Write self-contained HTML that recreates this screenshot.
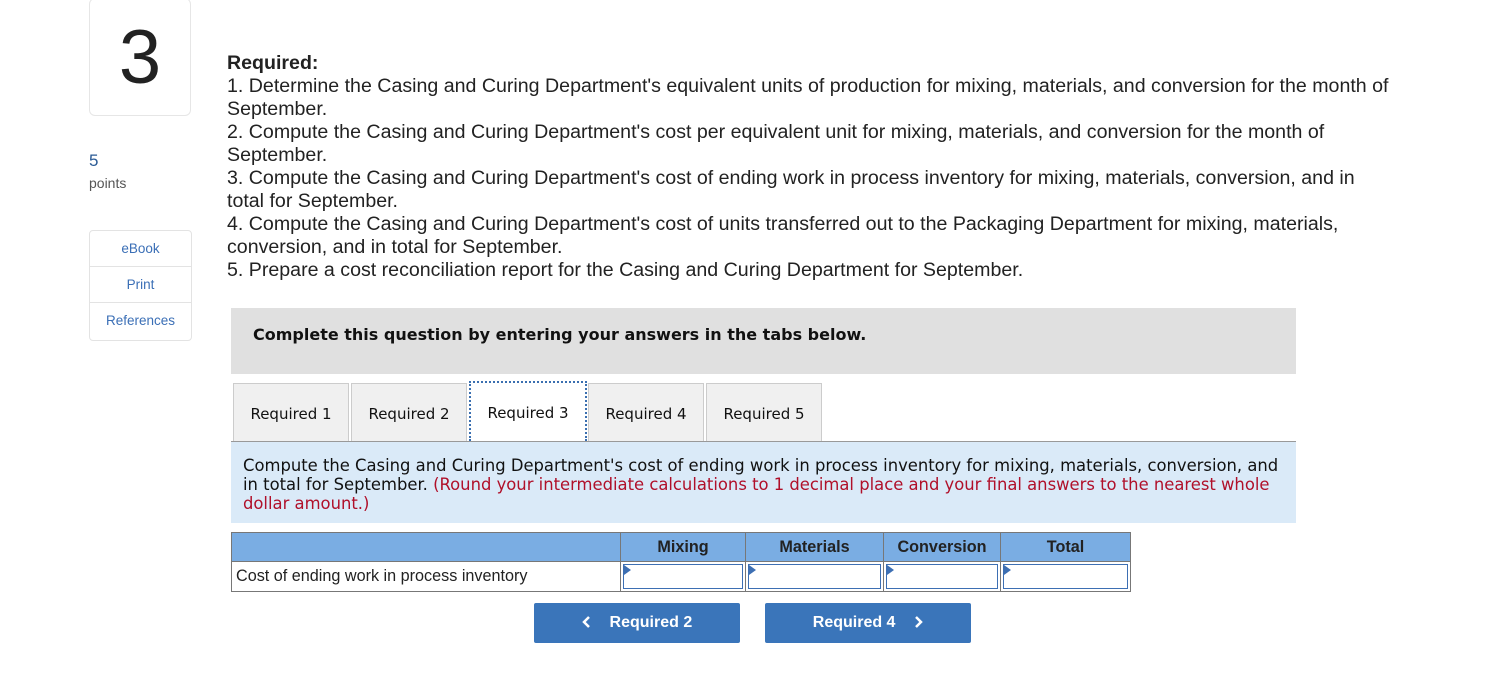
<!DOCTYPE html>
<html><head><meta charset="utf-8"><style>
*{box-sizing:border-box;margin:0;padding:0}
body{width:1503px;height:686px;background:#fff;position:relative;overflow:hidden;font-family:"Liberation Sans",sans-serif;color:#222}
.abs{position:absolute}
.qnum{left:89px;top:-2px;width:102px;height:118px;border:1px solid #e6e6e6;border-radius:6px;font-size:76px;text-align:center;line-height:118px;color:#222}
.pts{left:89px;top:150px;color:#555;font-size:14px;line-height:22px}
.pts b{font-weight:normal;color:#2a5a95;font-size:17px}
.links{left:89px;top:230px;width:103px;border:1px solid #e3e3e3;border-radius:4px}
.links div{text-align:center;color:#3b6fb6;font-size:13.5px;border-bottom:1px solid #e3e3e3;height:36px;line-height:35px}
.links div:last-child{border:none;height:37px}
.req{left:227px;top:52px;width:1250px;font-size:19.6px;line-height:23px;color:#222;white-space:nowrap}
.gray{left:231px;top:308px;width:1065px;height:66px;background:#e0e0e0;font-family:"DejaVu Sans",sans-serif;font-weight:bold;font-size:16px;padding:17px 0 0 22px;color:#111}
.tab{top:383px;height:58px;width:116px;background:#f0f0f0;border:1px solid #ccc;border-bottom:none;font-family:"DejaVu Sans",sans-serif;font-size:15px;text-align:center;line-height:60px;color:#111}
.tab.act{background:#fff;border:2px dotted #3a6fb0;border-bottom:none;height:60px;top:381px}
.blue{left:231px;top:441px;width:1065px;height:82px;background:#daeaf8;border-top:1px solid #999;font-family:"DejaVu Sans",sans-serif;font-size:16.4px;line-height:19px;padding:14px 12px;color:#111;white-space:nowrap}
.blue span{color:#b0102a}
table{position:absolute;left:231px;top:532px;border-collapse:collapse;font-size:16.2px}
td{border:1px solid #777;height:29px}
.h td{background:#7aade3;font-weight:bold;text-align:center;color:#222;height:29px}
.inp{padding:2px}
.inp div{height:25px;border:1px solid #3d6fb3;position:relative;background:#fff}
.inp div:before{content:"";position:absolute;left:0;top:0;border-left:7px solid #3d6fb3;border-top:5px solid transparent;border-bottom:5px solid transparent}
.btn{top:603px;height:40px;width:206px;background:#3a75ba;border-radius:2px;color:#fff;font-weight:bold;font-size:16px;text-align:center;line-height:40px}
.btn svg{vertical-align:-2px}
</style></head><body>
<div class="abs qnum">3</div>
<div class="abs pts"><b>5</b><br>points</div>
<div class="abs links"><div>eBook</div><div>Print</div><div>References</div></div>
<div class="abs req"><b>Required:</b><br>1. Determine the Casing and Curing Department's equivalent units of production for mixing, materials, and conversion for the month of<br>September.<br>2. Compute the Casing and Curing Department's cost per equivalent unit for mixing, materials, and conversion for the month of<br>September.<br>3. Compute the Casing and Curing Department's cost of ending work in process inventory for mixing, materials, conversion, and in<br>total for September.<br>4. Compute the Casing and Curing Department's cost of units transferred out to the Packaging Department for mixing, materials,<br>conversion, and in total for September.<br>5. Prepare a cost reconciliation report for the Casing and Curing Department for September.</div>
<div class="abs gray">Complete this question by entering your answers in the tabs below.</div>
<div class="abs tab" style="left:233px">Required 1</div>
<div class="abs tab" style="left:351px">Required 2</div>
<div class="abs tab act" style="left:469px;width:118px">Required 3</div>
<div class="abs tab" style="left:588px">Required 4</div>
<div class="abs tab" style="left:706px">Required 5</div>
<div class="abs blue">Compute the Casing and Curing Department's cost of ending work in process inventory for mixing, materials, conversion, and<br>in total for September. <span>(Round your intermediate calculations to 1 decimal place and your final answers to the nearest whole<br>dollar amount.)</span></div>
<table>
<tr class="h"><td style="width:389px"></td><td style="width:125px">Mixing</td><td style="width:138px">Materials</td><td style="width:117px">Conversion</td><td style="width:130px">Total</td></tr>
<tr><td style="padding-left:4px;color:#222">Cost of ending work in process inventory</td><td class="inp"><div></div></td><td class="inp"><div></div></td><td class="inp"><div></div></td><td class="inp"><div></div></td></tr>
</table>
<div class="abs btn" style="left:534px"><svg width="10" height="14" viewBox="0 0 10 14"><path d="M7 2L2 7l5 5" stroke="#fff" stroke-width="2.5" fill="none"/></svg>&nbsp;&nbsp;&nbsp;&nbsp;Required 2</div>
<div class="abs btn" style="left:765px">Required 4&nbsp;&nbsp;&nbsp;&nbsp;<svg width="10" height="14" viewBox="0 0 10 14"><path d="M3 2l5 5-5 5" stroke="#fff" stroke-width="2.5" fill="none"/></svg></div>
</body></html>
